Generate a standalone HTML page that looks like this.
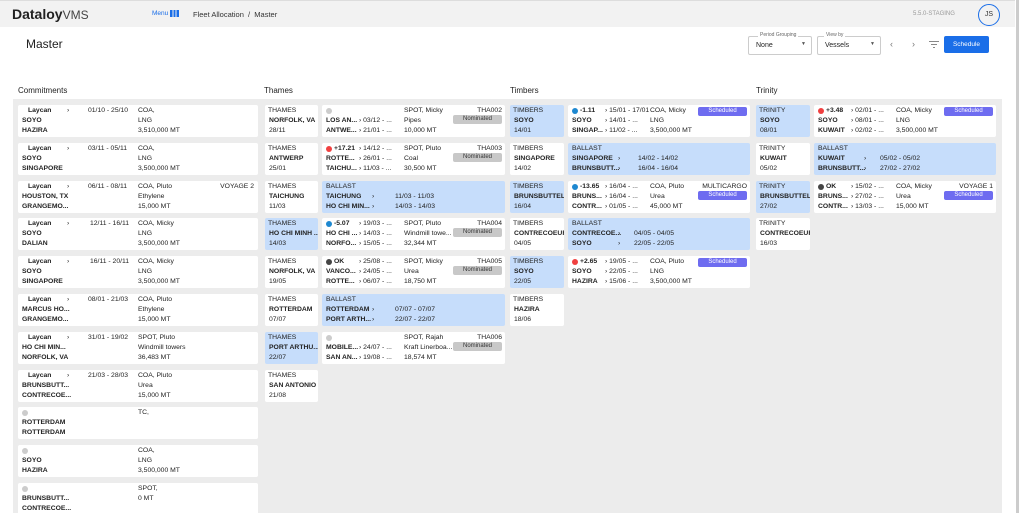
<!DOCTYPE html>
<html><head><meta charset="utf-8"><style>
*{margin:0;padding:0;box-sizing:border-box}
body{width:1024px;height:513px;overflow:hidden;background:#fff;font-family:"Liberation Sans",sans-serif;color:#222;position:relative}
.hdr{position:absolute;left:0;top:0;width:1015px;height:27px;background:#f2f2f2;border-top:1px solid #ddd}
.a{position:absolute;white-space:nowrap}
.panel{position:absolute;left:13px;top:99px;width:989px;height:414px;background:#ececec}
.c{position:absolute;background:#fff;border-radius:2px;height:32px;font-size:6.8px;line-height:10px}
.c.b{background:#c6ddfb}
.c .a{top:1px}
.l2{margin-top:10px}.l3{margin-top:20px}
.bd{font-weight:bold}
.dot{position:absolute;width:6px;height:6px;border-radius:3px;top:3px!important}
.nom{position:absolute;right:3px;top:10px;width:49px;height:9px;background:#c8c8c8;border-radius:2px;font-size:6px;line-height:9px;text-align:center;color:#333}
.sch{position:absolute;right:3px;width:49px;height:9px;background:#6e6cf0;border-radius:2px;font-size:6px;line-height:9px;text-align:center;color:#fff}
.ttl{position:absolute;top:86px;font-size:8px}
.sel{position:absolute;top:36px;height:19px;border:1px solid #ccc;border-radius:2px;background:#fff;font-size:7px}
</style></head><body>
<div class="hdr">
<div class="a" style="left:12px;top:5px;font-size:14px;font-weight:bold;color:#222">Dataloy<span style="font-weight:normal;font-size:12px;color:#444">VMS</span></div>
<div class="a" style="left:152px;top:9px;font-size:6.5px;color:#1a6ee8">Menu</div>
<div class="a" style="left:170px;top:9px;width:9px;height:7px;background:repeating-linear-gradient(90deg,#1a6ee8 0 2.3px,#f2f2f2 2.3px 3.3px)"></div>
<div class="a" style="left:193px;top:9px;font-size:7.5px;color:#333">Fleet Allocation &nbsp;/ &nbsp;Master</div>
<div class="a" style="left:913px;top:10px;font-size:6px;color:#999">5.5.0-STAGING</div>
<div class="a" style="left:978px;top:3px;width:22px;height:22px;border:1.5px solid #1a6ee8;border-radius:50%;font-size:7px;line-height:19px;text-align:center;color:#333">JS</div>
</div>
<div class="a" style="left:1016px;top:0;width:3px;height:513px;background:#ccc"></div>
<div class="a" style="left:26px;top:37px;font-size:12px;color:#222">Master</div>
<div class="sel" style="left:748px;width:64px"><span class="a" style="left:9px;top:-5px;font-size:5px;background:#fff;padding:0 2px;color:#666">Period Grouping</span><span class="a" style="left:7px;top:5px">None</span><span class="a" style="left:52px;top:4px;font-size:5px;color:#555">▼</span></div>
<div class="sel" style="left:817px;width:64px"><span class="a" style="left:6px;top:-5px;font-size:5px;background:#fff;padding:0 2px;color:#666">View by</span><span class="a" style="left:7px;top:5px">Vessels</span><span class="a" style="left:52px;top:4px;font-size:5px;color:#555">▼</span></div>
<div class="a" style="left:890px;top:39px;font-size:9px;color:#777">‹</div>
<div class="a" style="left:912px;top:39px;font-size:9px;color:#777">›</div>
<div class="a" style="left:929px;top:41px;width:10px;height:1px;background:#888"></div>
<div class="a" style="left:931px;top:44px;width:6px;height:1px;background:#888"></div>
<div class="a" style="left:933px;top:47px;width:2px;height:1px;background:#888"></div>
<div class="a" style="left:944px;top:36px;width:45px;height:17px;background:#1a6ee8;border-radius:2px;color:#fff;font-size:6.5px;line-height:17px;text-align:center">Schedule</div>

<div class="ttl" style="left:18px">Commitments</div>
<div class="ttl" style="left:264px">Thames</div>
<div class="ttl" style="left:510px">Timbers</div>
<div class="ttl" style="left:756px">Trinity</div>
<div class="panel"></div>

<!-- Commitments -->
<div class="c" style="left:18px;top:105px;width:240px"><span class="a bd" style="left:10px">Laycan</span><span class="a" style="left:49px">›</span><span class="a" style="left:70px">01/10 - 25/10</span><span class="a" style="left:120px">COA,</span><span class="a bd l2" style="left:4px">SOYO</span><span class="a l2" style="left:120px">LNG</span><span class="a bd l3" style="left:4px">HAZIRA</span><span class="a l3" style="left:120px">3,510,000 MT</span></div>
<div class="c" style="left:18px;top:143px;width:240px"><span class="a bd" style="left:10px">Laycan</span><span class="a" style="left:49px">›</span><span class="a" style="left:70px">03/11 - 05/11</span><span class="a" style="left:120px">COA,</span><span class="a bd l2" style="left:4px">SOYO</span><span class="a l2" style="left:120px">LNG</span><span class="a bd l3" style="left:4px">SINGAPORE</span><span class="a l3" style="left:120px">3,500,000 MT</span></div>
<div class="c" style="left:18px;top:181px;width:240px"><span class="a bd" style="left:10px">Laycan</span><span class="a" style="left:49px">›</span><span class="a" style="left:70px">06/11 - 08/11</span><span class="a" style="left:120px">COA, Pluto</span><span class="a" style="right:4px">VOYAGE 2</span><span class="a bd l2" style="left:4px">HOUSTON, TX</span><span class="a l2" style="left:120px">Ethylene</span><span class="a bd l3" style="left:4px">GRANGEMO...</span><span class="a l3" style="left:120px">15,000 MT</span></div>
<div class="c" style="left:18px;top:218px;width:240px"><span class="a bd" style="left:10px">Laycan</span><span class="a" style="left:49px">›</span><span class="a" style="left:72px">12/11 - 16/11</span><span class="a" style="left:120px">COA, Micky</span><span class="a bd l2" style="left:4px">SOYO</span><span class="a l2" style="left:120px">LNG</span><span class="a bd l3" style="left:4px">DALIAN</span><span class="a l3" style="left:120px">3,500,000 MT</span></div>
<div class="c" style="left:18px;top:256px;width:240px"><span class="a bd" style="left:10px">Laycan</span><span class="a" style="left:49px">›</span><span class="a" style="left:72px">16/11 - 20/11</span><span class="a" style="left:120px">COA, Micky</span><span class="a bd l2" style="left:4px">SOYO</span><span class="a l2" style="left:120px">LNG</span><span class="a bd l3" style="left:4px">SINGAPORE</span><span class="a l3" style="left:120px">3,500,000 MT</span></div>
<div class="c" style="left:18px;top:294px;width:240px"><span class="a bd" style="left:10px">Laycan</span><span class="a" style="left:49px">›</span><span class="a" style="left:70px">08/01 - 21/03</span><span class="a" style="left:120px">COA, Pluto</span><span class="a bd l2" style="left:4px">MARCUS HO...</span><span class="a l2" style="left:120px">Ethylene</span><span class="a bd l3" style="left:4px">GRANGEMO...</span><span class="a l3" style="left:120px">15,000 MT</span></div>
<div class="c" style="left:18px;top:332px;width:240px"><span class="a bd" style="left:10px">Laycan</span><span class="a" style="left:49px">›</span><span class="a" style="left:70px">31/01 - 19/02</span><span class="a" style="left:120px">SPOT, Pluto</span><span class="a bd l2" style="left:4px">HO CHI MIN...</span><span class="a l2" style="left:120px">Windmill towers</span><span class="a bd l3" style="left:4px">NORFOLK, VA</span><span class="a l3" style="left:120px">36,483 MT</span></div>
<div class="c" style="left:18px;top:370px;width:240px"><span class="a bd" style="left:10px">Laycan</span><span class="a" style="left:49px">›</span><span class="a" style="left:70px">21/03 - 28/03</span><span class="a" style="left:120px">COA, Pluto</span><span class="a bd l2" style="left:4px">BRUNSBUTT...</span><span class="a l2" style="left:120px">Urea</span><span class="a bd l3" style="left:4px">CONTRECOE...</span><span class="a l3" style="left:120px">15,000 MT</span></div>
<div class="c" style="left:18px;top:407px;width:240px"><span class="dot" style="left:4px;background:#ccc"></span><span class="a" style="left:120px">TC,</span><span class="a bd l2" style="left:4px">ROTTERDAM</span><span class="a bd l3" style="left:4px">ROTTERDAM</span></div>
<div class="c" style="left:18px;top:445px;width:240px"><span class="dot" style="left:4px;background:#ccc"></span><span class="a" style="left:120px">COA,</span><span class="a bd l2" style="left:4px">SOYO</span><span class="a l2" style="left:120px">LNG</span><span class="a bd l3" style="left:4px">HAZIRA</span><span class="a l3" style="left:120px">3,500,000 MT</span></div>
<div class="c" style="left:18px;top:483px;width:240px"><span class="dot" style="left:4px;background:#ccc"></span><span class="a" style="left:120px">SPOT,</span><span class="a bd l2" style="left:4px">BRUNSBUTT...</span><span class="a l2" style="left:120px">0 MT</span><span class="a bd l3" style="left:4px">CONTRECOE...</span></div>

<!-- Thames vessels -->
<div class="c" style="left:265px;top:105px;width:53px"><span class="a" style="left:3px">THAMES</span><span class="a bd l2" style="left:4px">NORFOLK, VA</span><span class="a l3" style="left:4px">28/11</span></div>
<div class="c" style="left:265px;top:143px;width:53px"><span class="a" style="left:3px">THAMES</span><span class="a bd l2" style="left:4px">ANTWERP</span><span class="a l3" style="left:4px">25/01</span></div>
<div class="c" style="left:265px;top:181px;width:53px"><span class="a" style="left:3px">THAMES</span><span class="a bd l2" style="left:4px">TAICHUNG</span><span class="a l3" style="left:4px">11/03</span></div>
<div class="c b" style="left:265px;top:218px;width:53px;overflow:hidden"><span class="a" style="left:3px">THAMES</span><span class="a bd l2" style="left:4px">HO CHI MINH ...</span><span class="a l3" style="left:4px">14/03</span></div>
<div class="c" style="left:265px;top:256px;width:53px"><span class="a" style="left:3px">THAMES</span><span class="a bd l2" style="left:4px">NORFOLK, VA</span><span class="a l3" style="left:4px">19/05</span></div>
<div class="c" style="left:265px;top:294px;width:53px"><span class="a" style="left:3px">THAMES</span><span class="a bd l2" style="left:4px">ROTTERDAM</span><span class="a l3" style="left:4px">07/07</span></div>
<div class="c b" style="left:265px;top:332px;width:53px;overflow:hidden"><span class="a" style="left:3px">THAMES</span><span class="a bd l2" style="left:4px">PORT ARTHU...</span><span class="a l3" style="left:4px">22/07</span></div>
<div class="c" style="left:265px;top:370px;width:53px"><span class="a" style="left:3px">THAMES</span><span class="a bd l2" style="left:4px">SAN ANTONIO</span><span class="a l3" style="left:4px">21/08</span></div>

<!-- Thames voyages -->
<div class="c" style="left:322px;top:105px;width:183px"><span class="dot" style="left:4px;background:#ccc"></span><span class="a" style="left:82px">SPOT, Micky</span><span class="a" style="right:3px">THA002</span><div class="nom">Nominated</div><span class="a bd l2" style="left:4px">LOS AN...</span><span class="a l2" style="left:37px">› 03/12 - ...</span><span class="a l2" style="left:82px">Pipes</span><span class="a bd l3" style="left:4px">ANTWE...</span><span class="a l3" style="left:37px">› 21/01 - ...</span><span class="a l3" style="left:82px">10,000 MT</span></div>
<div class="c" style="left:322px;top:143px;width:183px"><span class="dot" style="left:4px;background:#f04040"></span><span class="a bd" style="left:12px">+17.21</span><span class="a" style="left:37px">› 14/12 - ...</span><span class="a" style="left:82px">SPOT, Pluto</span><span class="a" style="right:3px">THA003</span><div class="nom">Nominated</div><span class="a bd l2" style="left:4px">ROTTE...</span><span class="a l2" style="left:37px">› 26/01 - ...</span><span class="a l2" style="left:82px">Coal</span><span class="a bd l3" style="left:4px">TAICHU...</span><span class="a l3" style="left:37px">› 11/03 - ...</span><span class="a l3" style="left:82px">30,500 MT</span></div>
<div class="c b" style="left:322px;top:181px;width:183px"><span class="a" style="left:4px">BALLAST</span><span class="a bd l2" style="left:4px">TAICHUNG</span><span class="a l2" style="left:50px">›</span><span class="a l2" style="left:73px">11/03 - 11/03</span><span class="a bd l3" style="left:4px">HO CHI MIN...</span><span class="a l3" style="left:50px">›</span><span class="a l3" style="left:73px">14/03 - 14/03</span></div>
<div class="c" style="left:322px;top:218px;width:183px"><span class="dot" style="left:4px;background:#1e88d0"></span><span class="a bd" style="left:12px">-5.07</span><span class="a" style="left:37px">› 19/03 - ...</span><span class="a" style="left:82px">SPOT, Pluto</span><span class="a" style="right:3px">THA004</span><div class="nom">Nominated</div><span class="a bd l2" style="left:4px">HO CHI ...</span><span class="a l2" style="left:37px">› 14/03 - ...</span><span class="a l2" style="left:82px">Windmill towe...</span><span class="a bd l3" style="left:4px">NORFO...</span><span class="a l3" style="left:37px">› 15/05 - ...</span><span class="a l3" style="left:82px">32,344 MT</span></div>
<div class="c" style="left:322px;top:256px;width:183px"><span class="dot" style="left:4px;background:#444"></span><span class="a bd" style="left:12px">OK</span><span class="a" style="left:37px">› 25/08 - ...</span><span class="a" style="left:82px">SPOT, Micky</span><span class="a" style="right:3px">THA005</span><div class="nom">Nominated</div><span class="a bd l2" style="left:4px">VANCO...</span><span class="a l2" style="left:37px">› 24/05 - ...</span><span class="a l2" style="left:82px">Urea</span><span class="a bd l3" style="left:4px">ROTTE...</span><span class="a l3" style="left:37px">› 06/07 - ...</span><span class="a l3" style="left:82px">18,750 MT</span></div>
<div class="c b" style="left:322px;top:294px;width:183px"><span class="a" style="left:4px">BALLAST</span><span class="a bd l2" style="left:4px">ROTTERDAM</span><span class="a l2" style="left:50px">›</span><span class="a l2" style="left:73px">07/07 - 07/07</span><span class="a bd l3" style="left:4px">PORT ARTH...</span><span class="a l3" style="left:50px">›</span><span class="a l3" style="left:73px">22/07 - 22/07</span></div>
<div class="c" style="left:322px;top:332px;width:183px"><span class="dot" style="left:4px;background:#ccc"></span><span class="a" style="left:82px">SPOT, Rajah</span><span class="a" style="right:3px">THA006</span><div class="nom">Nominated</div><span class="a bd l2" style="left:4px">MOBILE...</span><span class="a l2" style="left:37px">› 24/07 - ...</span><span class="a l2" style="left:82px">Kraft Linerboa...</span><span class="a bd l3" style="left:4px">SAN AN...</span><span class="a l3" style="left:37px">› 19/08 - ...</span><span class="a l3" style="left:82px">18,574 MT</span></div>

<!-- Timbers vessels -->
<div class="c b" style="left:510px;top:105px;width:54px"><span class="a" style="left:3px">TIMBERS</span><span class="a bd l2" style="left:4px">SOYO</span><span class="a l3" style="left:4px">14/01</span></div>
<div class="c" style="left:510px;top:143px;width:54px"><span class="a" style="left:3px">TIMBERS</span><span class="a bd l2" style="left:4px">SINGAPORE</span><span class="a l3" style="left:4px">14/02</span></div>
<div class="c b" style="left:510px;top:181px;width:54px;overflow:hidden"><span class="a" style="left:3px">TIMBERS</span><span class="a bd l2" style="left:4px">BRUNSBUTTEL</span><span class="a l3" style="left:4px">16/04</span></div>
<div class="c" style="left:510px;top:218px;width:54px;overflow:hidden"><span class="a" style="left:3px">TIMBERS</span><span class="a bd l2" style="left:4px">CONTRECOEUR</span><span class="a l3" style="left:4px">04/05</span></div>
<div class="c b" style="left:510px;top:256px;width:54px"><span class="a" style="left:3px">TIMBERS</span><span class="a bd l2" style="left:4px">SOYO</span><span class="a l3" style="left:4px">22/05</span></div>
<div class="c" style="left:510px;top:294px;width:54px"><span class="a" style="left:3px">TIMBERS</span><span class="a bd l2" style="left:4px">HAZIRA</span><span class="a l3" style="left:4px">18/06</span></div>

<!-- Timbers voyages -->
<div class="c" style="left:568px;top:105px;width:182px"><span class="dot" style="left:4px;background:#1e88d0"></span><span class="a bd" style="left:12px">-1.11</span><span class="a" style="left:37px">› 15/01 - 17/01</span><span class="a" style="left:82px">COA, Micky</span><div class="sch" style="top:2px">Scheduled</div><span class="a bd l2" style="left:4px">SOYO</span><span class="a l2" style="left:37px">› 14/01 - ...</span><span class="a l2" style="left:82px">LNG</span><span class="a bd l3" style="left:4px">SINGAP...</span><span class="a l3" style="left:37px">› 11/02 - ...</span><span class="a l3" style="left:82px">3,500,000 MT</span></div>
<div class="c b" style="left:568px;top:143px;width:182px"><span class="a" style="left:4px">BALLAST</span><span class="a bd l2" style="left:4px">SINGAPORE</span><span class="a l2" style="left:50px">›</span><span class="a l2" style="left:70px">14/02 - 14/02</span><span class="a bd l3" style="left:4px">BRUNSBUTT...</span><span class="a l3" style="left:50px">›</span><span class="a l3" style="left:70px">16/04 - 16/04</span></div>
<div class="c" style="left:568px;top:181px;width:182px"><span class="dot" style="left:4px;background:#1e88d0"></span><span class="a bd" style="left:12px">-13.65</span><span class="a" style="left:37px">› 16/04 - ...</span><span class="a" style="left:82px">COA, Pluto</span><span class="a" style="right:3px">MULTICARGO</span><div class="sch" style="top:10px">Scheduled</div><span class="a bd l2" style="left:4px">BRUNS...</span><span class="a l2" style="left:37px">› 16/04 - ...</span><span class="a l2" style="left:82px">Urea</span><span class="a bd l3" style="left:4px">CONTR...</span><span class="a l3" style="left:37px">› 01/05 - ...</span><span class="a l3" style="left:82px">45,000 MT</span></div>
<div class="c b" style="left:568px;top:218px;width:182px"><span class="a" style="left:4px">BALLAST</span><span class="a bd l2" style="left:4px">CONTRECOE...</span><span class="a l2" style="left:50px">›</span><span class="a l2" style="left:66px">04/05 - 04/05</span><span class="a bd l3" style="left:4px">SOYO</span><span class="a l3" style="left:50px">›</span><span class="a l3" style="left:66px">22/05 - 22/05</span></div>
<div class="c" style="left:568px;top:256px;width:182px"><span class="dot" style="left:4px;background:#f04040"></span><span class="a bd" style="left:12px">+2.65</span><span class="a" style="left:37px">› 19/05 - ...</span><span class="a" style="left:82px">COA, Pluto</span><div class="sch" style="top:2px">Scheduled</div><span class="a bd l2" style="left:4px">SOYO</span><span class="a l2" style="left:37px">› 22/05 - ...</span><span class="a l2" style="left:82px">LNG</span><span class="a bd l3" style="left:4px">HAZIRA</span><span class="a l3" style="left:37px">› 15/06 - ...</span><span class="a l3" style="left:82px">3,500,000 MT</span></div>

<!-- Trinity vessels -->
<div class="c b" style="left:756px;top:105px;width:54px"><span class="a" style="left:3px">TRINITY</span><span class="a bd l2" style="left:4px">SOYO</span><span class="a l3" style="left:4px">08/01</span></div>
<div class="c" style="left:756px;top:143px;width:54px"><span class="a" style="left:3px">TRINITY</span><span class="a bd l2" style="left:4px">KUWAIT</span><span class="a l3" style="left:4px">05/02</span></div>
<div class="c b" style="left:756px;top:181px;width:54px;overflow:hidden"><span class="a" style="left:3px">TRINITY</span><span class="a bd l2" style="left:4px">BRUNSBUTTEL</span><span class="a l3" style="left:4px">27/02</span></div>
<div class="c" style="left:756px;top:218px;width:54px;overflow:hidden"><span class="a" style="left:3px">TRINITY</span><span class="a bd l2" style="left:4px">CONTRECOEUR</span><span class="a l3" style="left:4px">16/03</span></div>

<!-- Trinity voyages -->
<div class="c" style="left:814px;top:105px;width:182px"><span class="dot" style="left:4px;background:#f04040"></span><span class="a bd" style="left:12px">+3.48</span><span class="a" style="left:37px">› 02/01 - ...</span><span class="a" style="left:82px">COA, Micky</span><div class="sch" style="top:2px">Scheduled</div><span class="a bd l2" style="left:4px">SOYO</span><span class="a l2" style="left:37px">› 08/01 - ...</span><span class="a l2" style="left:82px">LNG</span><span class="a bd l3" style="left:4px">KUWAIT</span><span class="a l3" style="left:37px">› 02/02 - ...</span><span class="a l3" style="left:82px">3,500,000 MT</span></div>
<div class="c b" style="left:814px;top:143px;width:182px"><span class="a" style="left:4px">BALLAST</span><span class="a bd l2" style="left:4px">KUWAIT</span><span class="a l2" style="left:50px">›</span><span class="a l2" style="left:66px">05/02 - 05/02</span><span class="a bd l3" style="left:4px">BRUNSBUTT...</span><span class="a l3" style="left:50px">›</span><span class="a l3" style="left:66px">27/02 - 27/02</span></div>
<div class="c" style="left:814px;top:181px;width:182px"><span class="dot" style="left:4px;background:#444"></span><span class="a bd" style="left:12px">OK</span><span class="a" style="left:37px">› 15/02 - ...</span><span class="a" style="left:82px">COA, Micky</span><span class="a" style="right:3px">VOYAGE 1</span><div class="sch" style="top:10px">Scheduled</div><span class="a bd l2" style="left:4px">BRUNS...</span><span class="a l2" style="left:37px">› 27/02 - ...</span><span class="a l2" style="left:82px">Urea</span><span class="a bd l3" style="left:4px">CONTR...</span><span class="a l3" style="left:37px">› 13/03 - ...</span><span class="a l3" style="left:82px">15,000 MT</span></div>
</body></html>
